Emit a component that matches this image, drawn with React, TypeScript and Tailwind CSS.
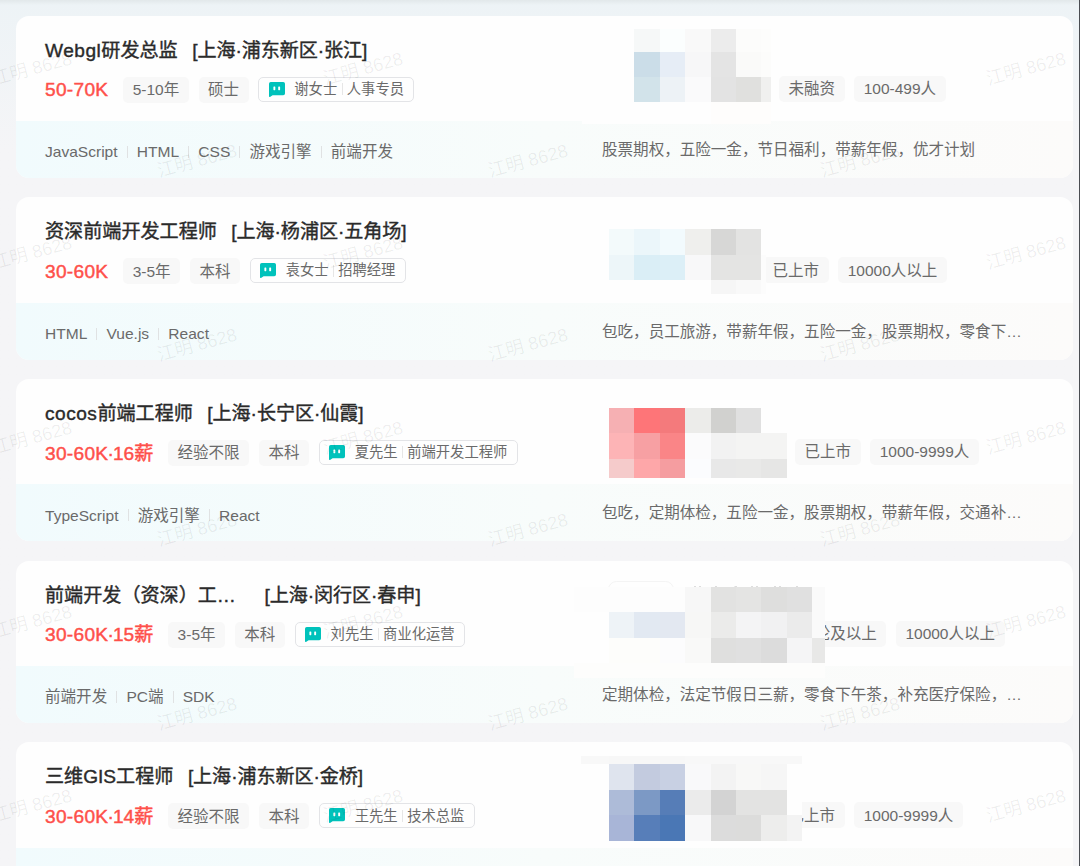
type MosaicRow = { y: number; h: number; cells: string[] };

type Job = {
  title: string;
  titleClass?: string;
  area: string;
  salary: string;
  tags: string[];
  contact: string;
  role: string;
  skills: string[];
  company: string[];
  companyClass: string;
  benefits: string;
  mosaic: { left: number; right: number; peek?: boolean; rows: MosaicRow[] };
};

const W = "#fefefe";

const jobs: Job[] = [
  {
    title: "Webgl研发总监",
    area: "[上海·浦东新区·张江]",
    salary: "50-70K",
    tags: ["5-10年", "硕士"],
    contact: "谢女士",
    role: "人事专员",
    skills: ["JavaScript", "HTML", "CSS", "游戏引擎", "前端开发"],
    company: ["未融资", "100-499人"],
    companyClass: "pl-[177px]",
    benefits: "股票期权，五险一金，节日福利，带薪年假，优才计划",
    mosaic: {
      left: 12,
      right: 201,
      rows: [
        { y: 13.2, h: 22.3, cells: [W, W, "#f6f8f8", "#fbfefe", "#f9f9f9", "#ececec", "#fcfcfb", "#fdfdfc"] },
        { y: 35.5, h: 25.3, cells: [W, W, "#cbdde8", "#e6edf6", "#f7f7f8", "#e4e4e4", "#fafaf9", "#fcfcfb"] },
        { y: 60.8, h: 25.4, cells: [W, W, "#d2e3ea", "#edf2f6", "#fafafb", "#e3e3e3", "#e0e0de", "#f0f0ef"] },
        { y: 86.2, h: 21.3, cells: [W, W, W, W, W, "#fefdfc", "#fefdfc", "#fefdfc"] },
      ],
    },
  },
  {
    title: "资深前端开发工程师",
    area: "[上海·杨浦区·五角场]",
    salary: "30-60K",
    tags: ["3-5年", "本科"],
    contact: "袁女士",
    role: "招聘经理",
    skills: ["HTML", "Vue.js", "React"],
    company: ["已上市", "10000人以上"],
    companyClass: "pl-[161px]",
    benefits: "包吃，员工旅游，带薪年假，五险一金，股票期权，零食下…",
    mosaic: {
      left: 6,
      right: 196,
      rows: [
        { y: 15, h: 17.3, cells: [W, W, W, W, W, W, W, W] },
        { y: 32.3, h: 25.4, cells: [W, "#f3fafb", "#ebf6fa", "#f2fafd", "#efefed", "#d7d7d6", "#e3e3e2", W] },
        { y: 57.7, h: 25.4, cells: [W, "#edf6f9", "#daeef6", "#dceff7", "#f8f8f9", "#e4e4e3", "#e4e4e3", "#fcfcfc"] },
        { y: 83.1, h: 13.6, cells: [W, W, W, W, W, "#f6f6f6", "#f9f9f9", "#fcfcfc"] },
      ],
    },
  },
  {
    title: "cocos前端工程师",
    area: "[上海·长宁区·仙霞]",
    salary: "30-60K·16薪",
    tags: ["经验不限", "本科"],
    contact: "夏先生",
    role: "前端开发工程师",
    skills: ["TypeScript", "游戏引擎", "React"],
    company: ["已上市", "1000-9999人"],
    companyClass: "pl-[193px]",
    benefits: "包吃，定期体检，五险一金，股票期权，带薪年假，交通补…",
    mosaic: {
      left: 12,
      right: 217,
      rows: [
        { y: 13, h: 15.7, cells: [W, W, W, W, W, W, W, W] },
        { y: 28.7, h: 25.6, cells: [W, "#f6b0b3", "#fe7578", "#f47a7c", "#ececea", "#d1d1cf", "#e0e0e0", "#fefefe"] },
        { y: 54.3, h: 25.6, cells: [W, "#fdb4b6", "#f7a0a3", "#fa8587", "#fbfbfc", "#f2f2f2", "#f4f4f3", "#f4f4f3"] },
        { y: 79.9, h: 19.4, cells: [W, "#f5cbcb", "#fea7a9", "#f59da0", "#fbfcfe", "#e8e8e8", "#e9e9e8", "#e6e6e5"] },
      ],
    },
  },
  {
    title: "前端开发（资深）工…",
    titleClass: "w-[205px]",
    area: "[上海·闵行区·春申]",
    salary: "30-60K·15薪",
    tags: ["3-5年", "本科"],
    contact: "刘先生",
    role: "商业化运营",
    skills: ["前端开发", "PC端", "SDK"],
    company: ["D轮及以上", "10000人以上"],
    companyClass: "pl-[192px]",
    benefits: "定期体检，法定节假日三薪，零食下午茶，补充医疗保险，…",
    mosaic: {
      left: 4,
      right: 254.5,
      peek: true,
      rows: [
        { y: 26.3, h: 25, cells: ["#fdfdfd", "#fdfdfd", "#fdfdfd", "#fdfdfd", "#f7f7f7", "#e2e2e1", "#e4e4e3", "#dededd", "#e0e0e0", "#fafafa"] },
        { y: 51.3, h: 25.3, cells: [W, "#eef3f7", "#e2e9f2", "#e3e8f1", "#f7f7f6", "#ebebea", "#f4f4f5", "#f1f1f2", "#ebebeb", "#fafafa"] },
        { y: 76.6, h: 25.4, cells: [W, "#fdfdfb", "#fdfdfb", "#fcfcfd", "#f9f9f8", "#dfdfde", "#e0e0e0", "#dcdcdc", "#f5f5f6", "#e8e8e7"] },
        { y: 102, h: 14.5, cells: ["#fdfdfc", "#fdfdfc", "#fdfdfc", "#fdfdfc", "#fdfdfc", "#fdfdfc", "#fdfdfc", "#fdfdfc", "#fdfdfc", "#fdfdfc"] },
      ],
    },
  },
  {
    title: "三维GIS工程师",
    area: "[上海·浦东新区·金桥]",
    salary: "30-60K·14薪",
    tags: ["经验不限", "本科"],
    contact: "王先生",
    role: "技术总监",
    skills: [],
    company: ["已上市", "1000-9999人"],
    companyClass: "pl-[177px]",
    benefits: "",
    mosaic: {
      left: 11,
      right: 232,
      rows: [
        { y: 14, h: 8.3, cells: ["#f8f8f8", "#f7f7f7", "#f7f7f7", "#f7f7f7", "#f8f8f8", "#f8f8f8", "#f8f8f8", "#f8f8f8", "#f8f8f8"] },
        { y: 22.3, h: 25.5, cells: [W, "#dfe4ee", "#c3cbdf", "#c8d0e3", "#f9f9fa", "#f3f3f3", "#f8f8f7", "#f6f6f6", W] },
        { y: 47.8, h: 25.5, cells: [W, "#adbbd8", "#7c99c5", "#567db7", "#ebebeb", "#d3d3d3", "#e3e3e2", "#e3e3e2", W] },
        { y: 73.3, h: 25.3, cells: [W, "#a8b5d7", "#577eb9", "#4a77b5", "#f8f8f9", "#dcdcdc", "#dcdcdb", "#ededec", "#f3f3f3"] },
      ],
    },
  },
];

const CELL = 25.4;
const FIRST_CELL = 13.6;

function Mosaic({ left, right, peek, rows }: Job["mosaic"]) {
  return (
    <svg
      className="absolute top-0 left-[554px] h-[120px] w-[260px]"
      viewBox="0 0 260 120"
      shapeRendering="crispEdges"
    >
      {/* logo frame and name that stick out above the blocks */}
      {peek && (
        <g shapeRendering="auto">
          <rect x="38.5" y="20.5" width="65" height="60" rx="8" fill="none" stroke="#f4f4f4" />
          <path
            d="M124 25.8h2M129 25.8h2M145 25.8h2M164.5 25.8h2.5M181 25.8h2M186 25.8h2M204 25.8h2M209 25.8h2M226 25.8h2"
            stroke="#cfcfcf"
          />
        </g>
      )}
      {rows.map((row) =>
        row.cells.map((fill, i) => {
          const x = i === 0 ? left : FIRST_CELL + i * CELL;
          const end = Math.min(FIRST_CELL + (i + 1) * CELL, right);
          const last = i === row.cells.length - 1 ? right : end;
          return (
            <rect
              key={`${row.y}-${i}`}
              x={x}
              y={row.y}
              width={Math.max(last - x, 0)}
              height={row.h}
              fill={fill}
            />
          );
        }),
      )}
    </svg>
  );
}

function ChatIcon() {
  return (
    <svg className="h-[15px] w-4 shrink-0" viewBox="0 0 16 15">
      <path
        d="M1.8 0h12.4A1.8 1.8 0 0 1 16 1.8v9.6a1.8 1.8 0 0 1-1.800 1.800H3.600L1 14.900c-.5.2-1 0-1-.6V1.800A1.800 1.800 0 0 1 1.800 0Z"
        fill="#00c2bb"
      />
      <rect x="4.4" y="4.5" width="1.9" height="3.7" rx="0.6" fill="#fff" />
      <rect x="9.2" y="4.5" width="1.9" height="3.7" rx="0.6" fill="#fff" />
    </svg>
  );
}

function Tag({ children }: { children: string }) {
  return (
    <span className="flex h-[26px] items-center rounded-[5px] bg-[#f8f8f8] px-[9.5px] text-[15.5px] whitespace-nowrap text-[#6a6a6a]">
      {children}
    </span>
  );
}

// a leading latin word is set slightly looser than the rest of the title
function Title({ text }: { text: string }) {
  const word = text.match(/^[A-Za-z]+/)?.[0] ?? "";
  return (
    <>
      {word && <span className="tracking-[0.5px]">{word}</span>}
      {text.slice(word.length)}
    </>
  );
}

function Salary({ text }: { text: string }) {
  const [range, months] = text.split("·");
  return (
    <span className="mt-0.5 mr-[5px] text-[19.1px] whitespace-nowrap text-[#fe504a] [-webkit-text-stroke:0.45px]">
      <span className="tracking-[0.3px]">{range}</span>
      {months && (
        <>
          <span className="-mx-[0.9px]">·</span>
          {months}
        </>
      )}
    </span>
  );
}

function JobCard({ job }: { job: Job }) {
  return (
    <li className="relative flex h-[162.5px] shrink-0 flex-col overflow-hidden rounded-[13px] bg-[#fefefe]">
      <div className="flex h-[105.5px] shrink-0">
        <div className="w-[586px] shrink-0 pt-[21.5px] pl-[29px]">
          <div className="flex h-7 items-center text-[19.1px] whitespace-nowrap text-[#2a2a2a] [-webkit-text-stroke:0.4px]">
            <span className={job.titleClass}>
              <Title text={job.title} />
            </span>
            <span className="ml-[14.5px] tracking-[-0.08px]">{job.area}</span>
          </div>
          <div className="mt-[11.5px] flex h-[26px] items-center gap-[9.8px]">
            <Salary text={job.salary} />
            {job.tags.map((tag) => (
              <Tag key={tag}>{tag}</Tag>
            ))}
            <span className="-mt-px flex h-[25px] items-center rounded-[5px] border border-[#e3e4e7] px-[9.5px] text-[14.3px] whitespace-nowrap text-[#6a6a6a]">
              <ChatIcon />
              <span className="mt-px ml-[9.5px]">{job.contact}</span>
              <span className="mx-[4.3px] h-3 w-px bg-[#e6e6e6]" />
              <span className="mt-px">{job.role}</span>
            </span>
          </div>
        </div>
        <div className={job.companyClass}>
          <div className="mt-[60px] flex gap-[9.7px]">
            {job.company.map((tag) => (
              <Tag key={tag}>{tag}</Tag>
            ))}
          </div>
        </div>
      </div>
      <div className="flex h-[57px] shrink-0 bg-linear-to-r from-[#f1fbfd] via-[#f8fcfb] to-[#fcfbfa] text-[15.55px] whitespace-nowrap text-[#6a6a6a]">
        <div className="flex w-[586px] shrink-0 items-center pt-[5px] pl-[29px]">
          {job.skills.map((skill, i) => (
            <span key={skill} className="flex items-center">
              {i > 0 && <span className="mx-[9.1px] h-3 w-px bg-[#e0e2e3]" />}
              {skill}
            </span>
          ))}
        </div>
        <div className="flex items-center">{job.benefits}</div>
      </div>
      <Mosaic {...job.mosaic} />
    </li>
  );
}

// centre points of the tiled watermark
const marks = [69, 253, 438, 622, 806].flatMap((y, i) => [
  { x: 32, y },
  { x: 363, y },
  { x: 1026, y },
  ...(i < 4
    ? [
        { x: 197, y: y + 92 },
        { x: 528, y: y + 92 },
        { x: 860, y: y + 92 },
      ]
    : []),
]);

function Watermark() {
  return (
    <div className="pointer-events-none absolute inset-0 text-[18.2px] leading-none whitespace-nowrap text-black/[0.065]">
      {marks.map(({ x, y }) => (
        <span
          key={`${x}-${y}`}
          className="absolute -translate-x-1/2 -translate-y-1/2 -rotate-15"
          style={{ left: x, top: y }}
        >
          江明 8628
        </span>
      ))}
    </div>
  );
}

export default function App() {
  return (
    <div className="relative h-[866px] w-[1080px] overflow-hidden border-r border-[#4a4d52] bg-[#f5f5f7] font-['Liberation_Sans','Noto_Sans_CJK_SC',sans-serif]">
      <div className="h-full bg-linear-to-b from-[#edf3f6] to-[#f5f5f7] to-[150px]">
        <div className="h-[5px] bg-linear-to-b from-[#e2e8ea] to-[#edf3f6]" />
        <ul className="flex flex-col gap-[19.2px] pt-[10.5px] pr-[6.5px] pl-4">
          {jobs.map((job) => (
            <JobCard key={job.title} job={job} />
          ))}
        </ul>
      </div>
      <Watermark />
    </div>
  );
}
